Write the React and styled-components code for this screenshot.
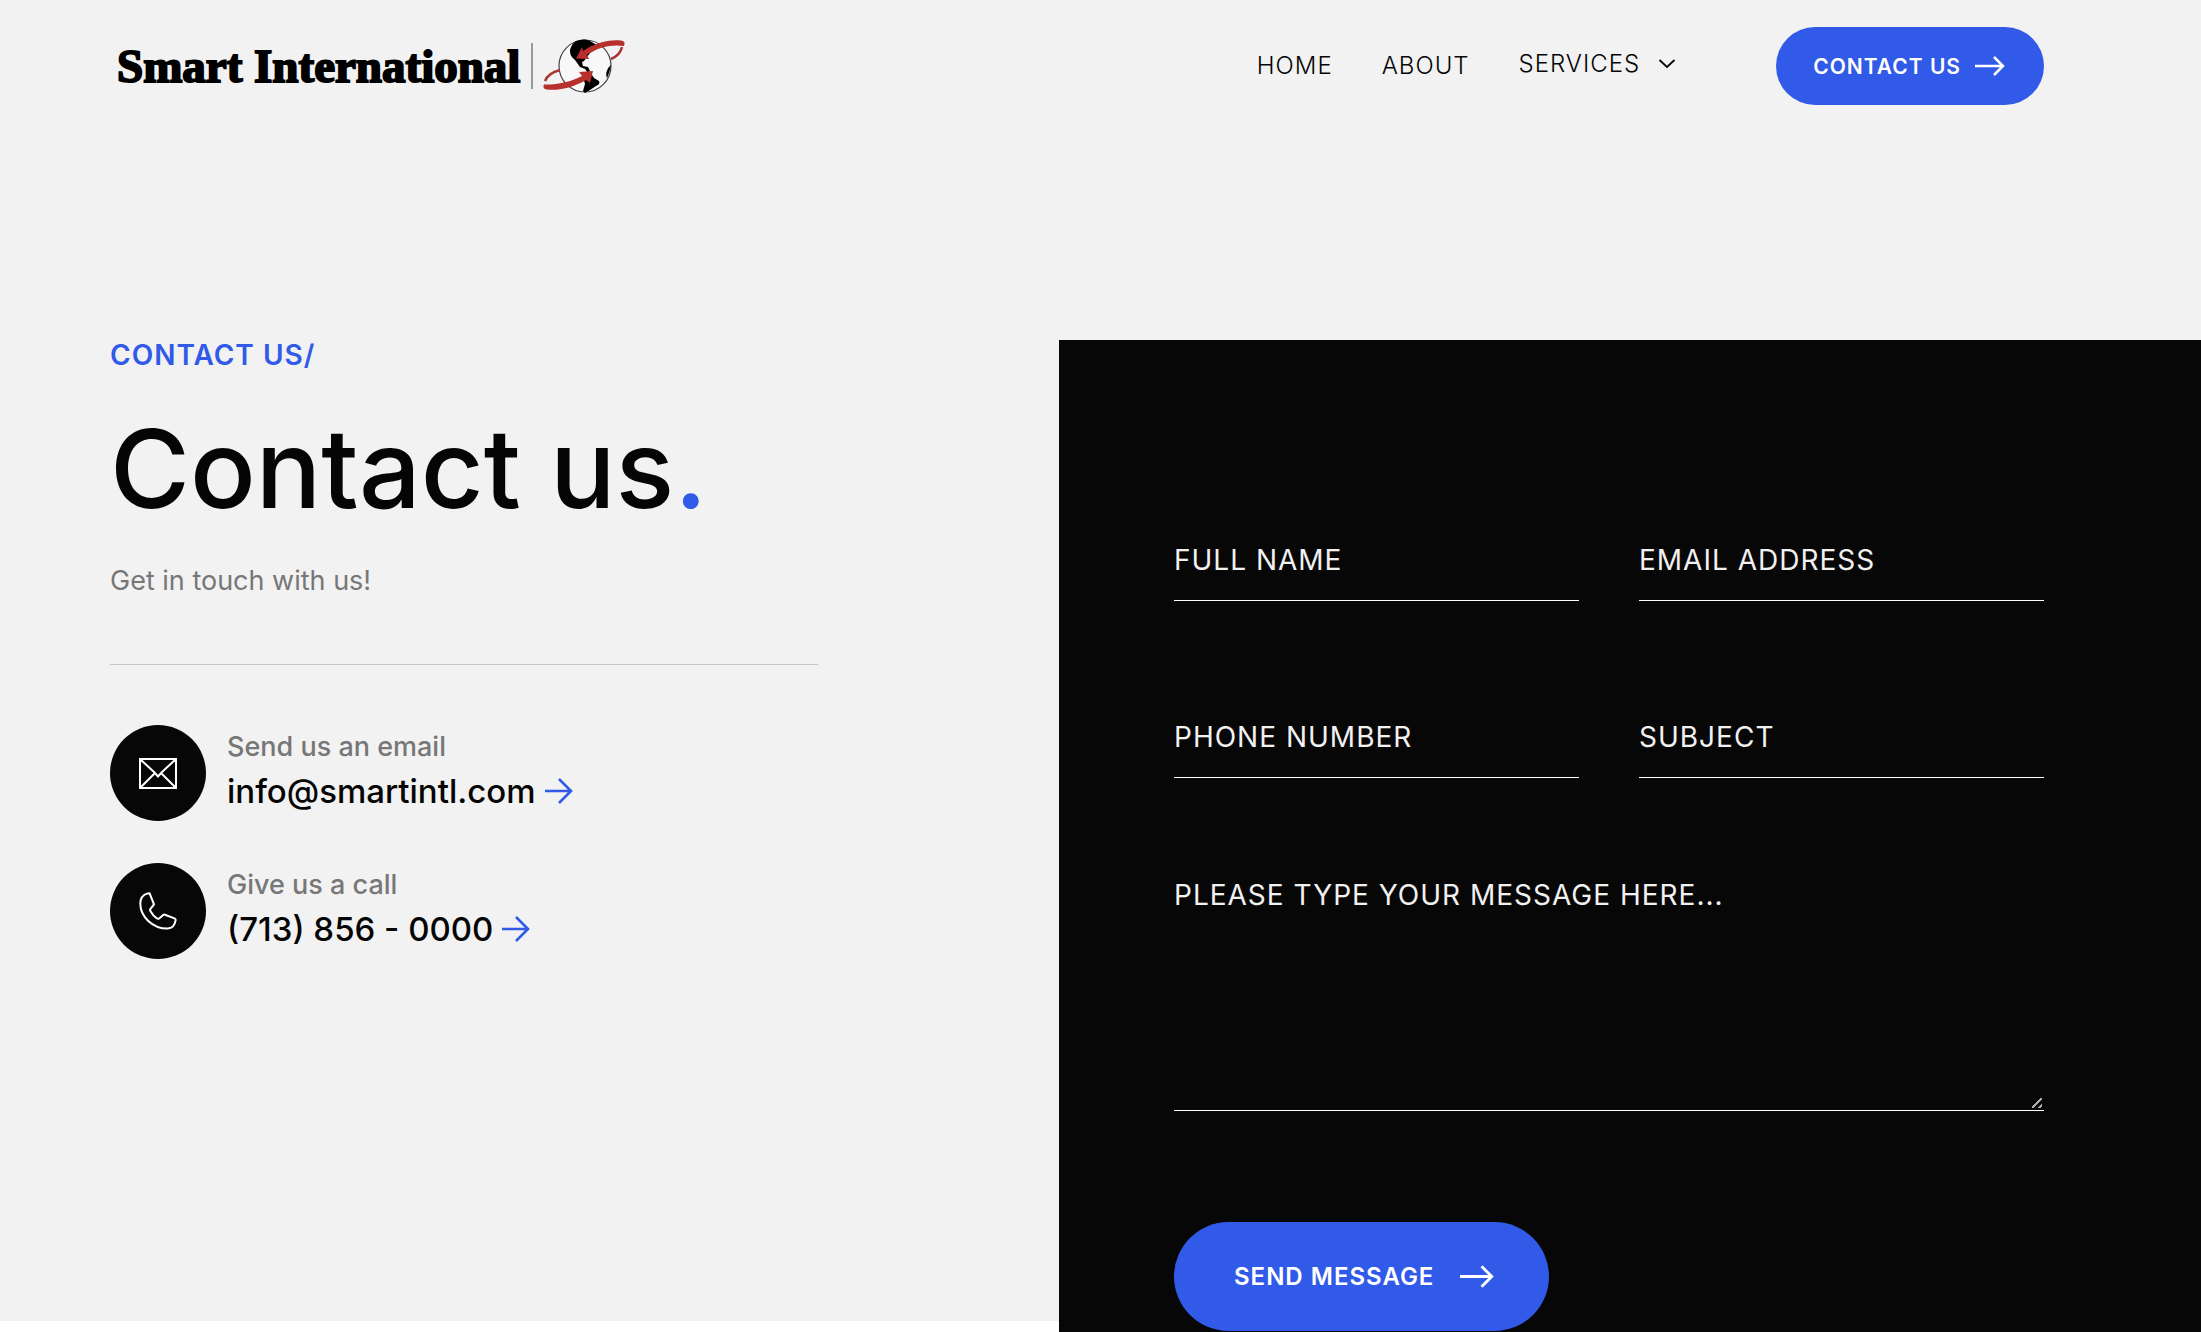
import React from 'react';
import styled, { createGlobalStyle } from 'styled-components';

const GlobalStyle = createGlobalStyle`
  * {
    box-sizing: border-box;
  }

  body {
    margin: 0;
    background: #fff;
    color: #050505;
    font-family: Inter, "Liberation Sans", sans-serif;
  }

  a {
    color: inherit;
    text-decoration: none;
  }
`;

const Page = styled.div`
  height: 100vh;
  overflow: hidden;
`;

const Section = styled.div`
  background: #f2f2f2;
  height: calc(100vh - 11px);
`;

const Header = styled.header`
  display: flex;
  align-items: center;
  justify-content: space-between;
  height: 132px;
  padding: 0 157px 0 117px;
`;

const Logo = styled.a`
  display: flex;
  align-items: center;
  color: #000;
  font-family: "Liberation Serif", serif;
  font-size: 47px;
  font-weight: 700;
  line-height: 56px;
  white-space: nowrap;
  -webkit-text-stroke: 2px #000;
`;

const LogoBar = styled.span`
  width: 2px;
  height: 46px;
  margin: 0 10px 0 11px;
  background: #999;
`;

const Nav = styled.nav`
  display: flex;
  align-items: center;
  font-size: 24px;
  font-weight: 300;
  letter-spacing: 1px;
  line-height: 32px;
  text-transform: uppercase;

  a {
    margin-right: 49px;
  }
`;

const Dropdown = styled.button`
  display: flex;
  align-items: center;
  gap: 18px;
  margin: 0 100px 4px 0;
  padding: 0;
  border: 0;
  background: none;
  color: inherit;
  font: inherit;
  letter-spacing: inherit;
  text-transform: inherit;
`;

const Pill = styled.button`
  display: flex;
  align-items: center;
  gap: ${({ $large }) => ($large ? 26 : 14)}px;
  height: ${({ $large }) => ($large ? 109 : 78)}px;
  padding: 0 ${({ $large }) => ($large ? '55px 0 60px' : '39px 0 37px')};
  border: 0;
  border-radius: 55px;
  background: #315ae8;
  color: #fff;
  font-family: inherit;
  font-size: ${({ $large }) => ($large ? 24 : 21)}px;
  font-weight: 600;
  letter-spacing: 1px;
  text-transform: uppercase;
  white-space: nowrap;
`;

const Main = styled.main`
  display: grid;
  grid-template-columns: 1059fr 1142fr;
  padding-top: 208px;
`;

const Intro = styled.section`
  padding-left: 110px;
`;

const Eyebrow = styled.p`
  margin: 0;
  color: #315ae8;
  font-size: 28px;
  font-weight: 600;
  letter-spacing: 1px;
  line-height: 30px;
  text-transform: uppercase;
`;

const Title = styled.h1`
  margin: 32px 0 0;
  font-size: 109px;
  font-weight: 500;
  line-height: 132px;
  white-space: nowrap;

  span {
    color: #315ae8;
  }
`;

const Lead = styled.p`
  margin: 27px 0 0;
  color: #777;
  font-size: 27px;
  line-height: 40px;
`;

const Divider = styled.hr`
  width: 708px;
  max-width: 100%;
  margin: 63px 0 60px;
  border: 0;
  border-top: 1px solid #c4c4c4;
`;

const Contact = styled.div`
  display: flex;
  align-items: center;
  gap: 21px;
  margin-bottom: 42px;
`;

const Badge = styled.span`
  display: grid;
  place-items: center;
  width: 96px;
  height: 96px;
  border-radius: 50%;
  background: #070707;
`;

const ContactText = styled.div`
  padding-bottom: 8px;
  font-weight: 500;
  line-height: 44px;
`;

const ContactLabel = styled.div`
  color: #777;
  font-size: 27px;
`;

const ContactLink = styled.a`
  display: flex;
  align-items: center;
  gap: 9px;
  font-size: 33px;

  svg {
    color: #315ae8;
  }
`;

const Panel = styled.section`
  padding: 181px 157px 40px 115px;
  background: #070707;
`;

const Form = styled.form`
  display: grid;
  grid-template-columns: 1fr 1fr;
  column-gap: 60px;
  row-gap: 97px;

  input,
  textarea {
    display: block;
    width: 100%;
    padding: 0;
    border: 0;
    border-bottom: 1px solid #fff;
    border-radius: 0;
    outline: 0;
    background: transparent;
    color: #fff;
    font-family: inherit;
    font-size: 28px;
    letter-spacing: 1px;
    line-height: 40px;
  }

  input {
    height: 80px;
    padding: 8px 0 10px;
  }

  textarea {
    height: 236px;
    resize: vertical;
  }

  textarea::-webkit-resizer {
    background: linear-gradient(
        135deg,
        transparent 43%,
        #aaa 43% 56%,
        transparent 56% 78%,
        #aaa 78% 91%,
        transparent 91%
      )
      no-repeat right 2px bottom 2px / 10px 10px;
  }

  ::placeholder {
    color: #f1f1f1;
    opacity: 1;
    text-transform: uppercase;
  }
`;

const Wide = styled.div`
  grid-column: 1 / -1;
`;

const Submit = styled(Wide)`
  display: flex;
  padding-top: 14px;
`;

const FIELDS = [
  { name: 'name', type: 'text', label: 'Full name' },
  { name: 'email', type: 'email', label: 'Email address' },
  { name: 'phone', type: 'tel', label: 'Phone number' },
  { name: 'subject', type: 'text', label: 'Subject' },
];

function LongArrow({ width = 30, height = 20 }) {
  return (
    <svg width={width} height={height} viewBox="0 0 30 20" fill="none" stroke="currentColor" strokeWidth="2.5" aria-hidden="true">
      <path d="M0 10h28M19 1l9 9-9 9" />
    </svg>
  );
}

function ShortArrow() {
  return (
    <svg width="28" height="26" viewBox="0 0 28 26" fill="none" stroke="currentColor" strokeWidth="2.6" aria-hidden="true">
      <path d="M0 13h26M14 1l12 12-12 12" />
    </svg>
  );
}

function Chevron() {
  return (
    <svg width="18" height="10" viewBox="0 0 18 10" fill="none" stroke="currentColor" strokeWidth="1.8" aria-hidden="true">
      <path d="M1.5 1l7.5 7 7.5-7" />
    </svg>
  );
}

function Envelope() {
  return (
    <svg width="38" height="31" viewBox="0 0 38 31" fill="none" stroke="#fff" strokeWidth="2" aria-hidden="true">
      <path d="M1 1h36v29H1zM1 1l14.500 13.500L19 18.500l3.500-4L37 1M1 30l14.500-14.500M37 30L22.500 15.500" />
    </svg>
  );
}

function Phone() {
  return (
    <svg width="38" height="38" viewBox="0 0 38 38" fill="none" stroke="#fff" strokeWidth="2" strokeLinejoin="round" aria-hidden="true">
      <path d="M10.500 1.200L15 12.300l-3.500 4.500c-.6.800-.5 1.600 0 2.400 1.800 3.300 4 5.500 6.500 7.300.8.500 1.500.4 2.200-.1l4.300-3.600c.4-.3.9-.3 1.400-.1l9.600 3.700c1 .4 1.300 1 1.100 2-.8 5-3.600 8-8 8.200C13.500 36.700 1.300 24.500 1.300 11.500c0-5 2.500-8.600 7.400-10.100z" />
    </svg>
  );
}

function Globe() {
  return (
    <svg width="82" height="56" viewBox="0 0 82 56" aria-hidden="true">
      <circle cx="42" cy="28" r="26" fill="#f8f8f8" stroke="#444" strokeWidth="1.200" />
      <path d="M27 12c1-4 3-7 6-9 5-2 10-2 14 0l5 3 4 3-9 6-6 8-2 1 1 4 5 1 2 4-2 2-3-4-5-2-5-7c-4-3-5-6-5-10z" fill="#000" />
      <path d="M39 36l8-2 4 6 5 3c1 2 0 4-3 5l-6 4-5 3-2-2 2-7z" fill="#000" />
      <path d="M68 27c-1 5-2 9-4 13-2-4 0-10 4-13z" fill="#000" />
      <path d="M79 9c-1 5-4 9-11 12M17 32C9 34 4 38 2 43" fill="none" stroke="#a93430" strokeWidth="2.500" />
      <path d="M33 20.500L39 9l1 4C50 6 65 1 78 2.500c4 .5 4 2.500 3 5.500-12-2-25 1-37 8.500l2 4.500z" fill="#b7302d" />
      <path d="M1 46.500C14 47 27 44 39 38l-3-4 14-1-3 12-4-3C31 49 17 53 4 51.500c-4-.5-4-3-3-5z" fill="#b7302d" />
    </svg>
  );
}

export default function App() {
  return (
    <Page>
      <GlobalStyle />
      <Section>
        <Header>
          <Logo href="#home">
            Smart International
            <LogoBar />
            <Globe />
          </Logo>
          <Nav>
            <a href="#home">Home</a>
            <a href="#about">About</a>
            <Dropdown type="button">
              Services
              <Chevron />
            </Dropdown>
            <Pill type="button">
              Contact us
              <LongArrow />
            </Pill>
          </Nav>
        </Header>

        <Main>
          <Intro>
            <Eyebrow>Contact us/</Eyebrow>
            <Title>
              Contact us<span>.</span>
            </Title>
            <Lead>Get in touch with us!</Lead>
            <Divider />
            <Contact>
              <Badge>
                <Envelope />
              </Badge>
              <ContactText>
                <ContactLabel>Send us an email</ContactLabel>
                <ContactLink href="mailto:info@smartintl.com">
                  info@smartintl.com
                  <ShortArrow />
                </ContactLink>
              </ContactText>
            </Contact>
            <Contact>
              <Badge>
                <Phone />
              </Badge>
              <ContactText>
                <ContactLabel>Give us a call</ContactLabel>
                <ContactLink href="tel:7138560000">
                  (713) 856 - 0000
                  <ShortArrow />
                </ContactLink>
              </ContactText>
            </Contact>
          </Intro>

          <Panel>
            <Form>
              {FIELDS.map(({ name, type, label }) => (
                <input key={name} name={name} type={type} placeholder={label} aria-label={label} />
              ))}
              <Wide>
                <textarea name="message" placeholder="Please type your message here..." aria-label="Message" />
              </Wide>
              <Submit>
                <Pill type="button" $large>
                  Send message
                  <LongArrow width={34} height={23} />
                </Pill>
              </Submit>
            </Form>
          </Panel>
        </Main>
      </Section>
    </Page>
  );
}
